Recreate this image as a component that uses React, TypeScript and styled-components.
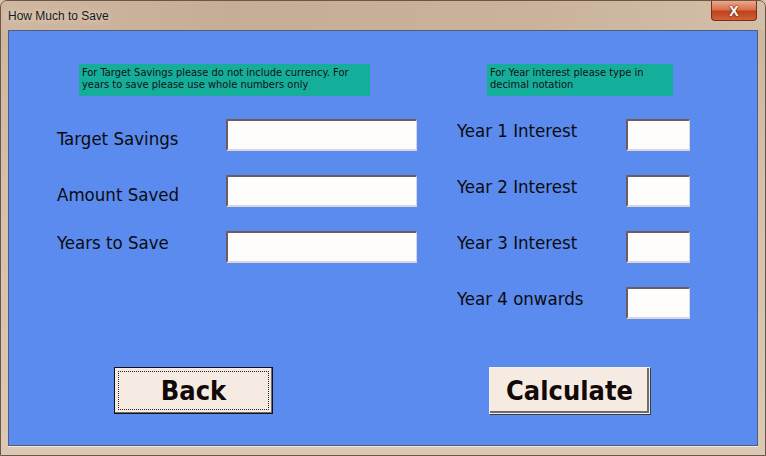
import styled, { createGlobalStyle } from 'styled-components';

const GlobalStyle = createGlobalStyle`
    html, body {
        margin: 0;
        padding: 0;
        background: #d8c3ad;
    }
    * {
        box-sizing: border-box;
    }
`;

const Window = styled.div`
    width: 766px;
    height: 456px;
    display: flex;
    flex-direction: column;
    background: linear-gradient(180deg, #cdb49c 0%, #d6c0aa 40%, #dcc8b3 100%);
    border: 1px solid #6b5747;
    border-radius: 7px 7px 0 0;
    overflow: hidden;
`;

const TitleBar = styled.div`
    height: 29px;
    display: flex;
    align-items: flex-start;
    justify-content: space-between;
    padding: 0 8px 0 7px;
    background: linear-gradient(90deg, #d0b8a0 0%, #c6ae96 30%, #cbb39b 70%, #d3bea8 100%);
`;

const Title = styled.span`
    margin-top: 8px;
    font-family: 'Liberation Sans', Arial, sans-serif;
    font-size: 12px;
    color: #1a1a1a;
    text-shadow: 0 0 6px rgba(255, 255, 255, 0.7);
`;

const CloseButton = styled.div`
    width: 46px;
    height: 20px;
    display: flex;
    align-items: center;
    justify-content: center;
    border: 1px solid #7a2d17;
    border-top: none;
    border-radius: 0 0 4px 4px;
    background: linear-gradient(180deg, #eba78c 0%, #d9714d 45%, #c2421b 55%, #d0603a 100%);
    color: #fff;
    font-family: 'Liberation Sans', Arial, sans-serif;
    font-weight: bold;
    font-size: 14px;
    text-shadow: 0 0 2px #5a1a08, 0 0 1px #5a1a08;
`;

const Client = styled.div`
    flex: 1;
    margin: 0 7px 9px 7px;
    background: #5b8bef;
    border: 1px solid #4d5f80;
    box-shadow: 0 1px 0 #f2e8dc;
    padding-top: 33px;
    display: flex;
    flex-direction: column;
`;

const NotesRow = styled.div`
    display: flex;
    gap: 117px;
    padding-left: 70px;
`;

const Note = styled.div<{ $width: number }>`
    width: ${p => p.$width}px;
    height: 32px;
    background: #15ae9b;
    padding: 3px 3px 0 3px;
    font-family: Tahoma, 'DejaVu Sans Condensed', 'Liberation Sans', sans-serif;
    font-size: 11px;
    line-height: 12px;
    color: #111;
`;

const FormArea = styled.div`
    display: flex;
    gap: 40px;
    padding-left: 48px;
    margin-top: 23px;
`;

const Column = styled.div`
    display: flex;
    flex-direction: column;
    gap: 24px;
`;

const FieldRow = styled.div`
    display: flex;
    align-items: center;
`;

const Label = styled.label<{ $nudge: number }>`
    width: 169px;
    margin-top: ${p => p.$nudge}px;
    font-family: Tahoma, 'DejaVu Sans Condensed', 'Liberation Sans', sans-serif;
    font-size: 18.5px;
    color: #0c0c0c;
`;

const TextBox = styled.input<{ $width: number }>`
    width: ${p => p.$width}px;
    height: 32px;
    background: #fffdfc;
    border: 2px solid;
    border-color: #6a5e5e #d8d8dc #d8d8dc #6a5e5e;
    border-width: 2px 1px 2px 2px;
    outline: none;
`;

const ButtonRow = styled.div`
    display: flex;
    gap: 216px;
    padding-left: 105px;
    margin-top: 48px;
`;

const Button = styled.button<{ $width: number; $focused?: boolean }>`
    width: ${p => p.$width}px;
    height: 47px;
    padding: 0;
    background: #f5ebe3;
    border: ${p => (p.$focused ? '1px solid #111' : '1px solid #f7f0ea')};
    box-shadow: ${p =>
        p.$focused ? 'inset -1px -1px 0 #6d6d6d' : 'inset -2px -2px 0 #6d6d6d, 1px 1px 0 #3a3a3a'};
    font-family: Tahoma, 'DejaVu Sans Condensed', 'Liberation Sans', sans-serif;
    font-weight: bold;
    font-size: 27px;
    color: #120806;
    display: flex;
    align-items: center;
    justify-content: center;
`;

const FocusRing = styled.span`
    width: calc(100% - 6px);
    height: calc(100% - 6px);
    border: 1px dotted #222;
    display: flex;
    align-items: center;
    justify-content: center;
`;

const leftFields = [
    { label: 'Target Savings', nudge: 6 },
    { label: 'Amount Saved', nudge: 6 },
    { label: 'Years to Save', nudge: -10 },
];
const rightFields = ['Year 1 Interest', 'Year 2 Interest', 'Year 3 Interest', 'Year 4 onwards'];

const App = () => {
    return <>
        <GlobalStyle />
        <Window>
            <TitleBar>
                <Title>How Much to Save</Title>
                <CloseButton>X</CloseButton>
            </TitleBar>
            <Client>
                <NotesRow>
                    <Note $width={291}>
                        For Target Savings please do not include currency. For<br />
                        years to save please use whole numbers only
                    </Note>
                    <Note $width={186}>
                        For Year interest please type in<br />
                        decimal notation
                    </Note>
                </NotesRow>
                <FormArea>
                    <Column>
                        {leftFields.map(f => (
                            <FieldRow key={f.label}>
                                <Label $nudge={f.nudge}>{f.label}</Label>
                                <TextBox $width={191} />
                            </FieldRow>
                        ))}
                    </Column>
                    <Column>
                        {rightFields.map(f => (
                            <FieldRow key={f}>
                                <Label $nudge={-10}>{f}</Label>
                                <TextBox $width={64} />
                            </FieldRow>
                        ))}
                    </Column>
                </FormArea>
                <ButtonRow>
                    <Button $width={159} $focused>
                        <FocusRing>Back</FocusRing>
                    </Button>
                    <Button $width={161}>Calculate</Button>
                </ButtonRow>
            </Client>
        </Window>
    </>;
};

export default App;
